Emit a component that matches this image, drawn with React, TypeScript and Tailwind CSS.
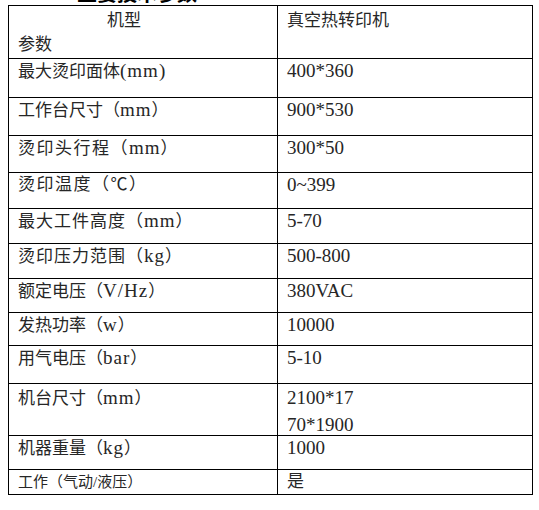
type Seg = string | { en: string };

const rows: { label: Seg[]; value: string; h: string; lc: string }[] = [
  { label: ["最大烫印面体", { en: "(mm)" }], value: "400*360", h: "h-[39px]", lc: "" },
  { label: ["工作台尺寸（", { en: "mm" }, "）"], value: "900*530", h: "h-[38px]", lc: "" },
  { label: ["烫印头行程（", { en: "mm" }, "）"], value: "300*50", h: "h-[37px]", lc: "tracking-[1.5px]" },
  { label: ["烫印温度（℃）"], value: "0~399", h: "h-[36px]", lc: "tracking-[1.5px]" },
  { label: ["最大工件高度（", { en: "mm" }, "）"], value: "5-70", h: "h-[35px]", lc: "text-[16px] tracking-[1px]" },
  { label: ["烫印压力范围（", { en: "kg" }, "）"], value: "500-800", h: "h-[35px]", lc: "text-[16px] tracking-[1px]" },
  { label: ["额定电压（", { en: "V/Hz" }, "）"], value: "380VAC", h: "h-[34px]", lc: "" },
  { label: ["发热功率（", { en: "w" }, "）"], value: "10000", h: "h-[33px]", lc: "" },
  { label: ["用气电压（", { en: "bar" }, "）"], value: "5-10", h: "h-[38px]", lc: "" },
];

const Label = ({ segs }: { segs: Seg[] }) => (
  <>
    {segs.map((s, i) =>
      typeof s === "string" ? (
        <span key={i}>{s}</span>
      ) : (
        <span key={i} className="text-[19px] tracking-[1px]">
          {s.en}
        </span>
      )
    )}
  </>
);

const App = () => {
  return (
    <div className="w-[539px] h-[510px] bg-white text-[#262626] font-['Liberation_Serif','Noto_Sans_CJK_SC',serif]">
      {/* title above the table, mostly cut off */}
      <div className="h-[3px] overflow-hidden flex items-end pl-[77px]">
        <span className="text-[20px] leading-[20px] font-bold text-black font-['Noto_Sans_CJK_SC',sans-serif]">主要技术参数</span>
      </div>

      <div className="mt-[2px] ml-[8px] w-[525px] border border-black">
        {/* header */}
        <div className="flex h-[53px] border-b border-black">
          <div className="w-[269px] border-r border-black pl-[9px] pt-[3px] text-[17px] leading-[24px]">
            <div className="pl-[89px]">机型</div>
            <div>参数</div>
          </div>
          <div className="flex-1 pl-[9px] pt-[3px] text-[17px] leading-[24px]">真空热转印机</div>
        </div>

        {rows.map((r, i) => (
          <div key={i} className={`flex border-b border-black ${r.h}`}>
            <div className={`w-[269px] border-r border-black pl-[9px] text-[17px] leading-[24px] ${r.lc}`}>
              <Label segs={r.label} />
            </div>
            <div className="flex-1 pl-[9px] text-[19px] leading-[24px]">{r.value}</div>
          </div>
        ))}

        <div className="flex h-[52px] border-b border-black">
          <div className="w-[269px] border-r border-black pl-[9px] text-[17px] leading-[27px]">
            <Label segs={["机台尺寸（", { en: "mm" }, "）"]} />
          </div>
          <div className="flex-1 pl-[9px] text-[19px] leading-[27px]">
            <div>2100*17</div>
            <div>70*1900</div>
          </div>
        </div>

        <div className="flex h-[34px] border-b border-black">
          <div className="w-[269px] border-r border-black pl-[9px] text-[17px] leading-[24px]">
            <Label segs={["机器重量（", { en: "kg" }, "）"]} />
          </div>
          <div className="flex-1 pl-[9px] text-[19px] leading-[24px]">1000</div>
        </div>

        <div className="flex h-[24px]">
          <div className="w-[269px] border-r border-black pl-[9px] pt-[2px] text-[15px] leading-[20px]">工作（气动/液压）</div>
          <div className="flex-1 pl-[9px] pt-[2px] text-[17px] leading-[20px]">是</div>
        </div>
      </div>
    </div>
  );
};

export default App;
